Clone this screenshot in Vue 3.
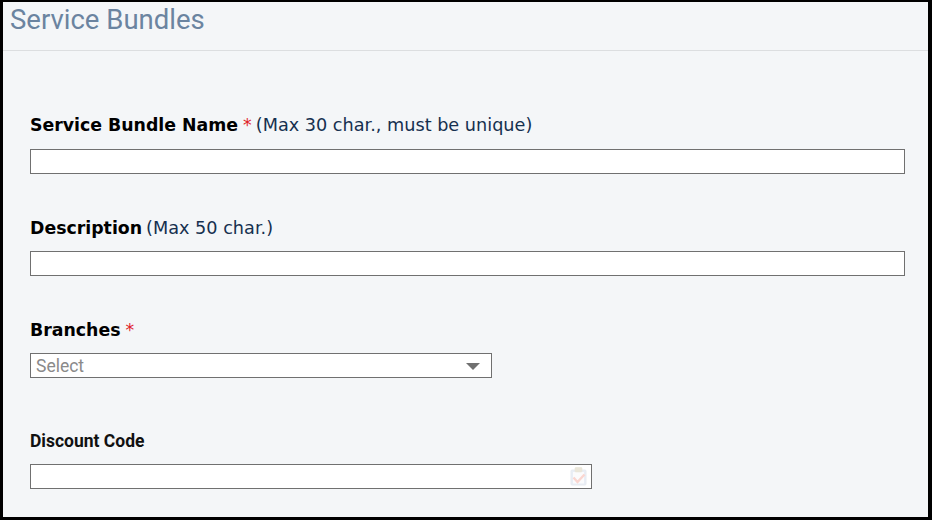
<script setup>
import { ref } from 'vue'

const bundleName = ref('')
const description = ref('')
const discountCode = ref('')
</script>

<template>
  <div class="frame">
    <div class="header">
      <h1 class="title">Service Bundles</h1>
    </div>

    <form class="form" @submit.prevent>
      <div class="field name-field">
        <label class="label">
          <span class="strong">Service Bundle Name</span>
          <span class="req">*</span>
          <span class="hint">(Max 30 char., must be unique)</span>
        </label>
        <input v-model="bundleName" class="input" type="text" />
      </div>

      <div class="field desc-field">
        <label class="label">
          <span class="strong">Description</span>
          <span class="hint">(Max 50 char.)</span>
        </label>
        <input v-model="description" class="input" type="text" />
      </div>

      <div class="field branch-field">
        <label class="label">
          <span class="strong">Branches</span>
          <span class="req">*</span>
        </label>
        <div class="select">
          <span class="placeholder">Select</span>
          <span class="caret"></span>
        </div>
      </div>

      <div class="field discount-field">
        <label class="label small">Discount Code</label>
        <div class="input code-wrap">
          <input v-model="discountCode" class="code-input" type="text" />
          <svg class="clip" width="17" height="19" viewBox="0 0 17 19">
            <rect x="1" y="3" width="15" height="15" rx="1" fill="#e9eef6" stroke="#e8ebf0" />
            <rect x="3" y="5" width="11" height="11.5" fill="#fbfbfc" />
            <rect x="5" y="0.5" width="7" height="4.5" rx="1" fill="#ebe7da" stroke="#e9e5d9" stroke-width="0.6" />
            <path d="M3.5 10.5 L7.5 15 L14.5 7.5" fill="none" stroke="#fad6d0" stroke-width="2.4" />
          </svg>
        </div>
      </div>
    </form>
  </div>
</template>

<style>
html, body {
  margin: 0;
  background: #000;
}
</style>

<style scoped>
.frame {
  width: 932px;
  height: 520px;
  box-sizing: border-box;
  border-style: solid;
  border-color: #000;
  border-width: 2px 4px 3px 3px;
  background: #f4f6f8;
  overflow: hidden;
}

.header {
  height: 48px;
  border-bottom: 1px solid #dcdee0;
  padding-left: 7px;
}

.title {
  margin: 0;
  font-family: Roboto, sans-serif;
  font-size: 27.5px;
  line-height: 36px;
  font-weight: 400;
  color: #6b84a0;
}

.form {
  padding: 0 24px 0 27px;
}

.field {
  display: flex;
  flex-direction: column;
}

.name-field {
  padding-top: 62px;
}

.name-field .label {
  margin-bottom: 11px;
}

.desc-field {
  padding-top: 42px;
}

.branch-field {
  padding-top: 42px;
}

.discount-field {
  padding-top: 53px;
}

.label {
  display: block;
  height: 25px;
  margin-bottom: 10px;
  font-family: "DejaVu Sans", Verdana, sans-serif;
  font-size: 17.33px;
  line-height: 25px;
  white-space: nowrap;
}

.strong {
  font-weight: 700;
  color: #000;
}

.req {
  margin-left: 5px;
  color: #e0222a;
}

.hint {
  margin-left: 4px;
  font-size: 17.66px;
  color: #16304f;
}

.label.small {
  font-family: Roboto, sans-serif;
  font-size: 17.5px;
  font-weight: 700;
  color: #111;
  height: 20px;
  line-height: 20px;
  margin-bottom: 13px;
}

.input {
  box-sizing: border-box;
  width: 875px;
  height: 25px;
  border: 1px solid #707070;
  background: #fff;
  padding: 0 5px;
  outline: none;
}

.select {
  box-sizing: border-box;
  width: 462px;
  height: 25px;
  border: 1px solid #707070;
  background: #fff;
  display: flex;
  align-items: center;
  justify-content: space-between;
  padding: 0 11px 0 5px;
}

.placeholder {
  font-family: Roboto, sans-serif;
  font-size: 17.5px;
  color: #8a8a8a;
}

.caret {
  width: 0;
  height: 0;
  margin-top: 2px;
  border-left: 7px solid transparent;
  border-right: 7px solid transparent;
  border-top: 7px solid #707070;
}

.code-wrap {
  width: 562px;
  display: flex;
  align-items: center;
  padding-right: 4px;
}

.code-input {
  flex: 1;
  min-width: 0;
  border: 0;
  outline: none;
  background: transparent;
}

.clip {
  flex: none;
}
</style>
